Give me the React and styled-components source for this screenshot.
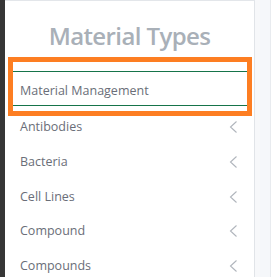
import React from "react";
import styled, { createGlobalStyle } from "styled-components";

const Global = createGlobalStyle`
  html, body { margin: 0; padding: 0; background: #f5f7fa; }
  body { font-family: "Open Sans", "Liberation Sans", sans-serif; }
`;

const Page = styled.div`
  display: flex;
  height: 277px;
  width: 271px;
  overflow: hidden;
`;

const DarkStrip = styled.div`
  width: 5px;
  background: #363636;
  flex: none;
`;

const Panel = styled.div`
  width: 249px;
  flex: none;
  background: #fff;
  border-top: 1px solid #e3e6ea;
  border-right: 1px solid #e1e4e8;
  display: flex;
  flex-direction: column;
`;

const Side = styled.div`
  flex: 1;
  background: #f5f7fa;
  border-left: 5px solid #f7f8fa;
  border-right: 1px solid #e8ebef;
`;

const Heading = styled.h2`
  margin: 18px 0 4px;
  font-size: 24px;
  line-height: 34px;
  font-weight: 600;
  color: #a9b0b8;
  text-align: center;
  letter-spacing: -0.6px;
`;

const Focus = styled.div`
  margin: 0 2px 0 3px;
  border: 5px solid #fd7e22;
  padding: 9px 0 5px;
`;

const ActiveRow = styled.div`
  border-top: 1px solid #16744a;
  border-bottom: 1px solid #16744a;
  height: 35px;
  display: flex;
  align-items: center;
  padding-left: 7px;
  padding-top: 3px;
  box-sizing: border-box;
  font-size: 12.5px;
  color: #6a6e78;
`;

const List = styled.div`
  display: flex;
  flex-direction: column;
  padding-top: 2px;
`;

const Row = styled.div`
  height: 34.75px;
  flex: none;
  display: flex;
  justify-content: space-between;
  align-items: flex-start;
  padding: 0 16px 0 15px;
`;

const Label = styled.span`
  font-size: 12.5px;
  line-height: 18px;
  color: #6a6e78;
`;

const Chevron = styled.svg`
  width: 9px;
  height: 18px;
  display: block;
`;

const items = ["Antibodies", "Bacteria", "Cell Lines", "Compound", "Compounds"];

export default function App() {
  return (
    <>
      <Global />
      <Page>
        <DarkStrip />
        <Panel>
          <Heading>Material Types</Heading>
          <Focus>
            <ActiveRow>Material Management</ActiveRow>
          </Focus>
          <List>
            {items.map((t) => (
              <Row key={t}>
                <Label>{t}</Label>
                <Chevron viewBox="0 0 9 18">
                  <path d="M7.5 3.5 L1.5 9 L7.5 14.5" fill="none" stroke="#b0b5bc" strokeWidth="1.1" />
                </Chevron>
              </Row>
            ))}
          </List>
        </Panel>
        <Side />
      </Page>
    </>
  );
}
